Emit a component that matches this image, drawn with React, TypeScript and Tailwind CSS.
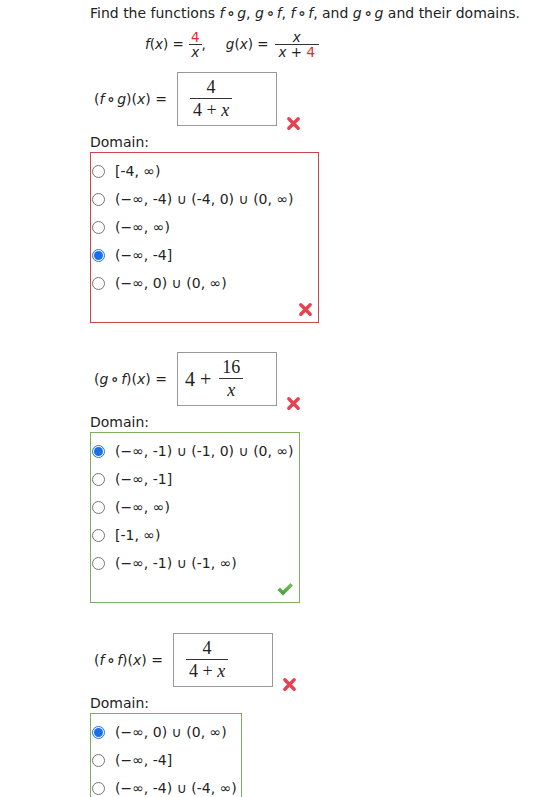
import React from "react";

const Radio = ({ checked }: { checked?: boolean }) =>
  checked ? (
    <span className="inline-flex w-[13px] h-[13px] rounded-full border border-[#1a73e8] bg-white items-center justify-center shrink-0">
      <span className="w-[9px] h-[9px] rounded-full bg-[#1a6fe8] block" />
    </span>
  ) : (
    <span className="inline-block w-[13px] h-[13px] rounded-full border border-[#767676] bg-white shrink-0" />
  );

const XIcon = () => (
  <svg width="15" height="15" viewBox="0 0 16 16">
    <path d="M3 3 L13 13 M13 3 L3 13" stroke="#e8404f" strokeWidth="3.6" strokeLinecap="round" />
  </svg>
);

const Check = () => (
  <svg width="18" height="15" viewBox="0 0 18 15">
    <defs>
      <linearGradient id="cg" x1="0" y1="0" x2="0" y2="1">
        <stop offset="0" stopColor="#7cc35a" />
        <stop offset="1" stopColor="#3d9a3a" />
      </linearGradient>
    </defs>
    <path d="M1.5 8 L4 5.5 L7 8.5 L14.5 1 L17 3.5 L7 13.5 Z" fill="url(#cg)" />
  </svg>
);

const Frac = ({ num, den }: { num: React.ReactNode; den: React.ReactNode }) => (
  <span className="inline-flex flex-col items-center align-middle">
    <span className="px-[2px] leading-[14px]">{num}</span>
    <span className="border-t border-[#333] px-[2px] leading-[14px] w-full text-center">{den}</span>
  </span>
);

const SFrac = ({ num, den }: { num: React.ReactNode; den: React.ReactNode }) => (
  <span className="inline-flex flex-col items-center font-['Liberation_Serif','DejaVu_Serif','Times_New_Roman',serif] text-[18px]">
    <span className="px-[3px] leading-[21px]">{num}</span>
    <span className="border-t border-[#333] px-[3px] leading-[22px] w-full text-center">{den}</span>
  </span>
);

const I = ({ children }: { children: React.ReactNode }) => <i className="italic">{children}</i>;
const O = () => <span className="text-[14px] font-bold mx-[2px]">∘</span>;

const Options = ({ items, sel, color, width, mark }: { items: string[]; sel: number; color: string; width: string; mark: "x" | "check" | null }) => (
  <div className={`${color} ${width} border pt-[4px] mt-[1px]`}>
    {items.map((t, i) => (
      <div key={i} className="h-[28px] flex items-center pl-[1px] gap-[10px]">
        <Radio checked={i === sel} />
        <span>{t}</span>
      </div>
    ))}
    {mark && (
      <div className="h-[25px] flex justify-end items-center pr-[5px]">
        {mark === "x" ? <XIcon /> : <Check />}
      </div>
    )}
  </div>
);

const Answer = ({ label, content, boxLeft }: { label: React.ReactNode; content: React.ReactNode; boxLeft: string }) => (
  <div className="flex items-end">
    <div className="flex items-center">
      <div className={`pl-[4px] ${boxLeft}`}>{label}</div>
      <div className="w-[100px] h-[54px] border border-[#999] flex items-center pl-[12px] text-[#222] font-['Liberation_Serif','DejaVu_Serif','Times_New_Roman',serif]">
        {content}
      </div>
    </div>
    <div className="ml-[9px] mb-[-5px]">
      <XIcon />
    </div>
  </div>
);

export default function App() {
  return (
    <div className="bg-white min-h-[797px] pl-[90px] pt-[4px] text-[14px] text-[#222] font-['DejaVu_Sans',Verdana,sans-serif]">
      <div className="leading-[18px] whitespace-nowrap">
        Find the functions <I>f</I>
        <O />
        <I>g</I>, <I>g</I>
        <O />
        <I>f</I>, <I>f</I>
        <O />
        <I>f</I>, and <I>g</I>
        <O />
        <I>g</I> and their domains.
      </div>
      <div className="pl-[55px] mt-[8px] flex items-center text-[13.5px]">
        <span>
          <I>f</I>(<I>x</I>) =
        </span>
        <span className="ml-[5px]">
          <Frac num={<span className="text-[#e8262c]">4</span>} den={<I>x</I>} />
        </span>
        <span className="mr-[20px]">,</span>
        <span>
          <I>g</I>(<I>x</I>) =
        </span>
        <span className="ml-[6px]">
          <Frac num={<I>x</I>} den={<span className="px-[2px]"><I>x</I> + <span className="text-[#e8262c]">4</span></span>} />
        </span>
      </div>

      <div className="mt-[13px]">
        <Answer
          label={<span>(<I>f</I><O /><I>g</I>)(<I>x</I>) =</span>}
          boxLeft="w-[87px]"
          content={<SFrac num="4" den={<span>4 + <i>x</i></span>} />}
        />
      </div>
      <div className="mt-[7px] leading-[18px]">Domain:</div>
      <Options
        items={["[-4, ∞)", "(−∞, -4) ∪ (-4, 0) ∪ (0, ∞)", "(−∞, ∞)", "(−∞, -4]", "(−∞, 0) ∪ (0, ∞)"]}
        sel={3}
        color="border-[#c9464f]"
        width="w-[229px]"
        mark="x"
      />

      <div className="mt-[29px]">
        <Answer
          label={<span>(<I>g</I><O /><I>f</I>)(<I>x</I>) =</span>}
          boxLeft="w-[87px]"
          content={
            <span className="flex items-center -ml-[5px]">
              <span className="mr-[8px] text-[20px]">4 +</span>
              <SFrac num="16" den={<i>x</i>} />
            </span>
          }
        />
      </div>
      <div className="mt-[7px] leading-[18px]">Domain:</div>
      <Options
        items={["(−∞, -1) ∪ (-1, 0) ∪ (0, ∞)", "(−∞, -1]", "(−∞, ∞)", "[-1, ∞)", "(−∞, -1) ∪ (-1, ∞)"]}
        sel={0}
        color="border-[#7fae62]"
        width="w-[210px]"
        mark="check"
      />

      <div className="mt-[30px]">
        <Answer
          label={<span>(<I>f</I><O /><I>f</I>)(<I>x</I>) =</span>}
          boxLeft="w-[83px]"
          content={<SFrac num="4" den={<span>4 + <i>x</i></span>} />}
        />
      </div>
      <div className="mt-[7px] leading-[18px]">Domain:</div>
      <Options
        items={["(−∞, 0) ∪ (0, ∞)", "(−∞, -4]", "(−∞, -4) ∪ (-4, ∞)"]}
        sel={0}
        color="border-[#7fae62]"
        width="w-[152px]"
        mark={null}
      />
    </div>
  );
}
